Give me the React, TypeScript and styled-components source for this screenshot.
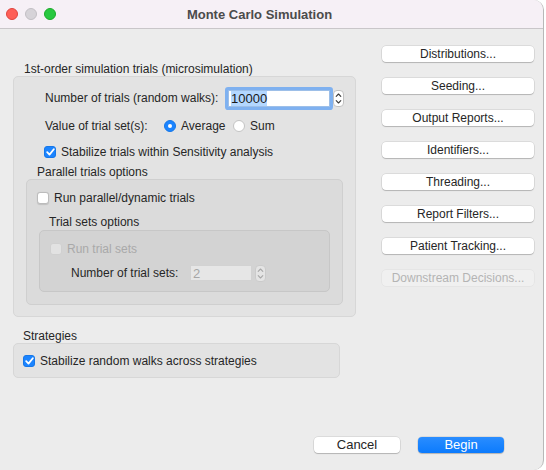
import React from "react"
import styled, { createGlobalStyle } from "styled-components"

const GlobalStyle = createGlobalStyle`
  html, body {
    margin: 0;
    padding: 0;
    background: #fff;
  }

  body {
    font-family: "Liberation Sans", Arial, sans-serif;
    font-size: 12px;
    color: #262626;
  }
`

const Window = styled.div`
  width: 544px;
  height: 470px;
  box-sizing: border-box;
  background: #ececec;
  border-right: 1px solid #b8b8b8;
  border-radius: 0 10px 10px 0;
  overflow: hidden;
  display: flex;
  flex-direction: column;
`

const TitleBar = styled.header`
  flex: none;
  height: 29px;
  box-sizing: border-box;
  padding: 0 30px 0 6px;
  background: #f6f0f6;
  border-bottom: 1px solid #c9c6c9;
  display: grid;
  grid-template-columns: 1fr auto 1fr;
  align-items: center;
`

const Lights = styled.div`
  display: flex;
  gap: 7px;
`

const Light = styled.span<{ $color: string; $edge: string }>`
  width: 12px;
  height: 12px;
  border-radius: 50%;
  box-sizing: border-box;
  background: ${p => p.$color};
  border: 0.5px solid ${p => p.$edge};
`

const Title = styled.h1`
  margin: 0;
  font-size: 13px;
  font-weight: bold;
  color: #4b4b4b;
`

const Body = styled.main`
  flex: 1;
  display: flex;
  align-items: flex-start;
`

const LeftColumn = styled.div`
  padding: 33px 0 0 13px;
  display: flex;
  flex-direction: column;
`

const RightColumn = styled.div`
  width: 152px;
  margin-left: 26px;
  padding-top: 17px;
  display: flex;
  flex-direction: column;
  gap: 16px;
`

const SectionLabel = styled.div<{ $ml: number; $mt?: number; $h?: number }>`
  margin-left: ${p => p.$ml}px;
  margin-top: ${p => p.$mt ?? 0}px;
  height: ${p => p.$h ?? 14}px;
  line-height: 14px;
  white-space: nowrap;
`

const tones = {
  outer: { bg: "#e3e3e3", border: "#d7d7d7" },
  mid: { bg: "#dbdbdb", border: "#cfcfcf" },
  inner: { bg: "#d3d3d3", border: "#c7c7c7" },
}

const Group = styled.section<{ $w: number; $tone: keyof typeof tones; $ml?: number; $pb: number }>`
  width: ${p => p.$w}px;
  margin-left: ${p => p.$ml ?? 0}px;
  padding-bottom: ${p => p.$pb}px;
  box-sizing: border-box;
  background: ${p => tones[p.$tone].bg};
  border: 1px solid ${p => tones[p.$tone].border};
  border-radius: 5px;
  display: flex;
  flex-direction: column;
`

const Row = styled.div<{ $mt: number; $pl: number; $h?: number }>`
  height: ${p => p.$h ?? 20}px;
  margin-top: ${p => p.$mt}px;
  padding-left: ${p => p.$pl}px;
  display: flex;
  align-items: center;
  white-space: nowrap;
`

const FieldLabel = styled.span<{ $w: number }>`
  width: ${p => p.$w}px;
  flex: none;
`

const OptionLabel = styled.label<{ $disabled?: boolean; $w?: number }>`
  display: flex;
  align-items: center;
  gap: 5px;
  width: ${p => (p.$w ? `${p.$w}px` : "auto")};
  color: ${p => (p.$disabled ? "#a9a9a9" : "#262626")};
`

const CheckBox = styled.span<{ $checked?: boolean; $disabled?: boolean }>`
  width: 12px;
  height: 12px;
  flex: none;
  box-sizing: border-box;
  border-radius: 3px;
  display: flex;
  align-items: center;
  justify-content: center;
  background: ${p => (p.$checked ? "#1b84ff" : p.$disabled ? "#e2e2e2" : "#fff")};
  border: 0.5px solid ${p => (p.$checked ? "#1677e8" : p.$disabled ? "#d0d0d0" : "#bcbcbc")};
  box-shadow: ${p => (p.$disabled || p.$checked ? "none" : "0 0.5px 1px rgba(0,0,0,0.12)")};
`

const RadioDot = styled.span<{ $checked?: boolean }>`
  width: 12px;
  height: 12px;
  flex: none;
  box-sizing: border-box;
  border-radius: 50%;
  display: flex;
  align-items: center;
  justify-content: center;
  background: ${p => (p.$checked ? "#1b84ff" : "#fff")};
  border: 0.5px solid ${p => (p.$checked ? "#1677e8" : "#c4c4c4")};

  &::after {
    content: "";
    width: 4px;
    height: 4px;
    border-radius: 50%;
    background: ${p => (p.$checked ? "#fff" : "transparent")};
  }
`

const TextField = styled.div<{ $w: number; $focused?: boolean; $disabled?: boolean }>`
  width: ${p => p.$w}px;
  height: ${p => (p.$focused ? 17 : 16)}px;
  box-sizing: border-box;
  padding-left: 2px;
  display: flex;
  align-items: center;
  font-size: 13px;
  background: ${p => (p.$disabled ? "#e6e6e6" : "#fff")};
  color: ${p => (p.$disabled ? "#a6a6a6" : "#1a1a1a")};
  border: 1px solid ${p => (p.$disabled ? "#d2d2d2" : "#9dbfe8")};
  box-shadow: ${p => (p.$focused ? "0 0 0 3px #7fb1f0" : "none")};
  border-radius: ${p => (p.$focused ? "1px" : "0")};
`

const Selected = styled.span`
  background: #b3d7ff;
  line-height: 15px;
`

const StepperBox = styled.span<{ $ml: number; $disabled?: boolean }>`
  margin-left: ${p => p.$ml}px;
  width: 11px;
  height: 17px;
  box-sizing: border-box;
  border-radius: 4px;
  background: ${p => (p.$disabled ? "#e4e4e4" : "#fff")};
  border: 0.5px solid ${p => (p.$disabled ? "#cbcbcb" : "#c2c2c2")};
  display: flex;
  align-items: center;
  justify-content: center;
`

const PushButton = styled.button<{ $disabled?: boolean }>`
  height: 16px;
  padding: 0;
  font: inherit;
  font-size: 12px;
  line-height: 16px;
  border: none;
  border-radius: 4px;
  background: ${p => (p.$disabled ? "#f0f0f0" : "#fff")};
  color: ${p => (p.$disabled ? "#b4b4b4" : "#262626")};
  box-shadow: ${p =>
    p.$disabled
      ? "0 0 0 0.5px rgba(0,0,0,0.06)"
      : "0 0 0 0.5px rgba(0,0,0,0.14), 0 1px 1px rgba(0,0,0,0.18)"};
  white-space: nowrap;
`

const Footer = styled.footer`
  flex: none;
  display: flex;
  justify-content: flex-end;
  gap: 18px;
  padding: 0 39px 17px 0;
`

const DialogButton = styled(PushButton)<{ $primary?: boolean }>`
  width: 86px;
  height: 16px;
  font-size: 13px;
  background: ${p => (p.$primary ? "linear-gradient(#2a8dff, #0c7bfd)" : "#fff")};
  color: ${p => (p.$primary ? "#fff" : "#262626")};
`

const Check = () => (
  <svg width="9" height="8" viewBox="0 0 9 8">
    <path d="M1.2 4.2 L3.5 6.6 L7.8 1.2" fill="none" stroke="#fff" strokeWidth="1.8" strokeLinecap="round" strokeLinejoin="round" />
  </svg>
)

const Stepper = ({ ml, disabled }: { ml: number; disabled?: boolean }) => (
  <StepperBox $ml={ml} $disabled={disabled}>
    <svg width="7" height="13" viewBox="0 0 7 13">
      <path
        d="M1.2 4.3 L3.5 2 L5.8 4.3 M1.2 8.7 L3.5 11 L5.8 8.7"
        fill="none"
        stroke={disabled ? "#a8a8a8" : "#3a3a3a"}
        strokeWidth="1.1"
        strokeLinecap="round"
        strokeLinejoin="round"
      />
    </svg>
  </StepperBox>
)

const sideButtons = [
  "Distributions...",
  "Seeding...",
  "Output Reports...",
  "Identifiers...",
  "Threading...",
  "Report Filters...",
  "Patient Tracking...",
]

const App = (): React.ReactElement => {
  return (
    <>
      <GlobalStyle />
      <Window>
        <TitleBar>
          <Lights>
            <Light $color="#fe5f57" $edge="#e0443e" />
            <Light $color="#d6d3d8" $edge="#c2bfc4" />
            <Light $color="#28c840" $edge="#1aab29" />
          </Lights>
          <Title>Monte Carlo Simulation</Title>
          <span />
        </TitleBar>

        <Body>
          <LeftColumn>
            <SectionLabel $ml={11}>1st-order simulation trials (microsimulation)</SectionLabel>
            <Group $w={343} $tone="outer" $pb={11}>
              <Row $mt={10} $pl={31} $h={22}>
                <FieldLabel $w={183}>Number of trials (random walks):</FieldLabel>
                <TextField $w={102} $focused>
                  <Selected>10000</Selected>
                </TextField>
                <Stepper ml={3} />
              </Row>
              <Row $mt={7} $pl={31}>
                <FieldLabel $w={119}>Value of trial set(s):</FieldLabel>
                <OptionLabel $w={69}>
                  <RadioDot $checked />
                  Average
                </OptionLabel>
                <OptionLabel>
                  <RadioDot />
                  Sum
                </OptionLabel>
              </Row>
              <Row $mt={6} $pl={30}>
                <OptionLabel>
                  <CheckBox $checked>
                    <Check />
                  </CheckBox>
                  Stabilize trials within Sensitivity analysis
                </OptionLabel>
              </Row>
              <SectionLabel $ml={23} $mt={3}>Parallel trials options</SectionLabel>
              <Group $w={317} $tone="mid" $ml={12} $pb={12}>
                <Row $mt={8} $pl={10}>
                  <OptionLabel>
                    <CheckBox />
                    Run parallel/dynamic trials
                  </OptionLabel>
                </Row>
                <SectionLabel $ml={22} $mt={7} $h={15}>Trial sets options</SectionLabel>
                <Group $w={291} $tone="inner" $ml={12} $pb={8}>
                  <Row $mt={8} $pl={10}>
                    <OptionLabel $disabled>
                      <CheckBox $disabled />
                      Run trial sets
                    </OptionLabel>
                  </Row>
                  <Row $mt={4} $pl={31}>
                    <FieldLabel $w={119}>Number of trial sets:</FieldLabel>
                    <TextField $w={62} $disabled>
                      2
                    </TextField>
                    <Stepper ml={3} disabled />
                  </Row>
                </Group>
              </Group>
            </Group>

            <SectionLabel $ml={10} $mt={12}>Strategies</SectionLabel>
            <Group $w={327} $tone="outer" $pb={6}>
              <Row $mt={7} $pl={9}>
                <OptionLabel>
                  <CheckBox $checked>
                    <Check />
                  </CheckBox>
                  Stabilize random walks across strategies
                </OptionLabel>
              </Row>
            </Group>
          </LeftColumn>

          <RightColumn>
            {sideButtons.map(label => (
              <PushButton key={label}>{label}</PushButton>
            ))}
            <PushButton $disabled>Downstream Decisions...</PushButton>
          </RightColumn>
        </Body>

        <Footer>
          <DialogButton>Cancel</DialogButton>
          <DialogButton $primary>Begin</DialogButton>
        </Footer>
      </Window>
    </>
  )
}

export default App
